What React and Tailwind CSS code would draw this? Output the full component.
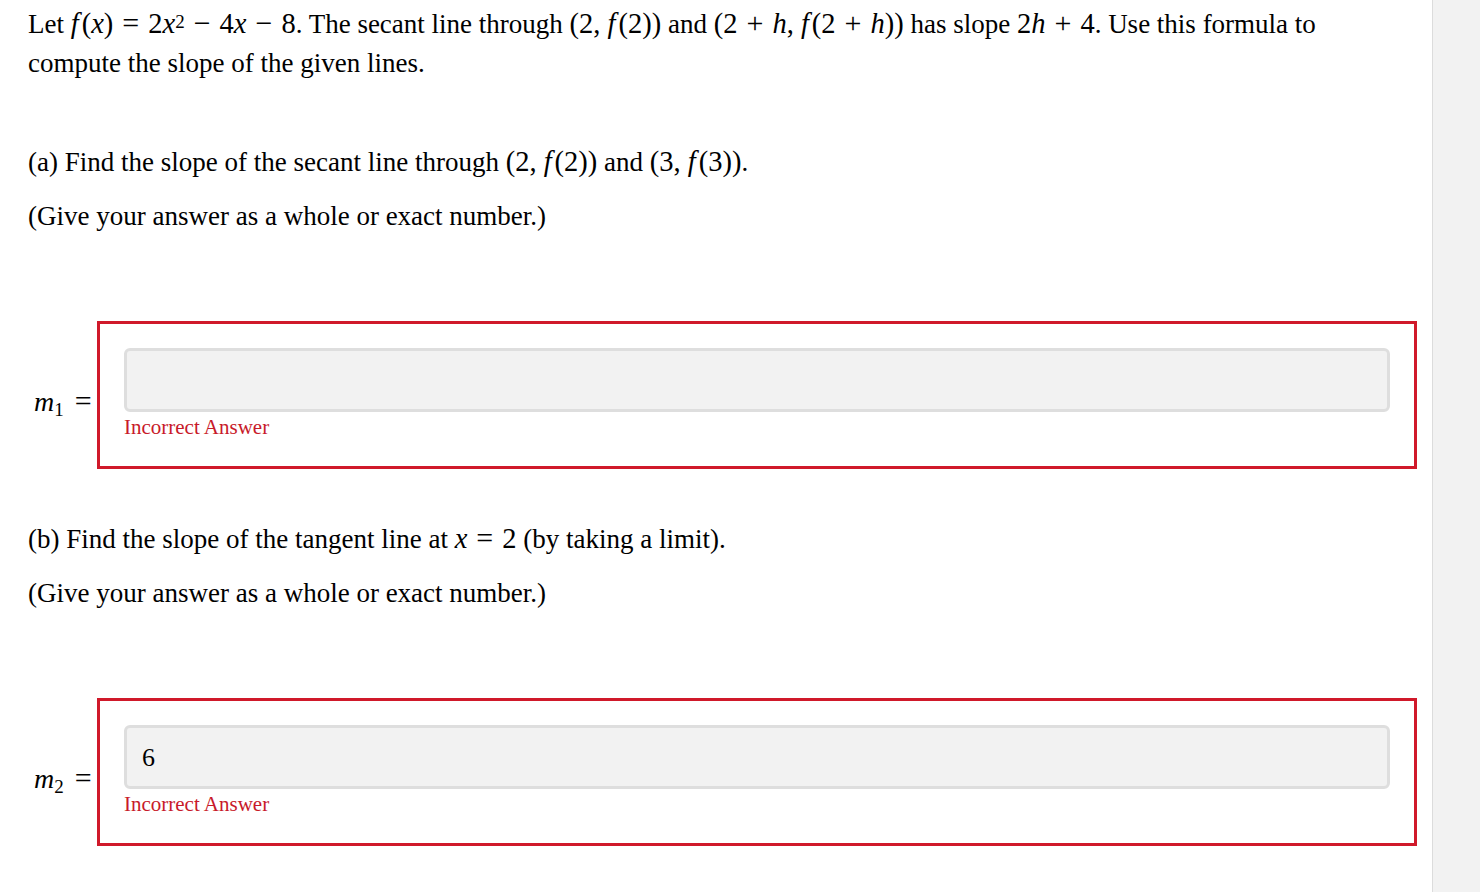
import React from "react";

const I = ({ children, className = "" }) => <span className={`italic ${className}`}>{children}</span>;
const Op = ({ children }) => <span className="mx-[0.3em] text-[30px] leading-none">{children}</span>;
const Rel = ({ children }) => <span className="mx-[0.3em] text-[30px] leading-none">{children}</span>;
const M = ({ children }) => <span className="whitespace-nowrap text-[28.5px] leading-none">{children}</span>;

const AnswerRow = ({ sub, value }) => (
  <div className="flex items-center">
    <div className="flex w-[69px] shrink-0 items-baseline pl-[6px] pt-[14px]">
      <span className="italic text-[28px]">m</span>
      <span className="relative top-[5px] text-[19px]">{sub}</span>
      <span className="ml-[11px] text-[30px]">=</span>
    </div>
    <div className="h-[148px] w-[1320px] border-[3px] border-[#d0192a] px-[24px] pt-[24px]">
      <div className="flex h-[64px] items-center rounded-[6px] border-[3px] border-[#dedede] bg-[#f2f2f2] px-[15px] text-[26px]">
        {value}
      </div>
      <div className="mt-[2px] text-[21px] leading-[26px] text-[#c81a2a]">Incorrect Answer</div>
    </div>
  </div>
);

export default function App() {
  return (
    <div className="flex h-[892px] w-full overflow-hidden bg-white font-['Liberation_Serif','Times_New_Roman',serif] text-black">
      <main className="w-[1432px] shrink-0 pl-[28px] pr-[15px] pt-[5px] text-[27px] leading-[39px]">
        <p className="w-[1330px]">
          Let{" "}
          <M>
            <I className="mr-[3px]">f</I>(<I>x</I>)<Rel>=</Rel>2<I>x</I>
            <sup className="relative -top-[5px] text-[19px] leading-none">2</sup>
            <Op>−</Op>4<I>x</I>
            <Op>−</Op>8
          </M>
          . The secant line through{" "}
          <M>
            (2, <I className="mr-[3px]">f</I>(2))
          </M>{" "}
          and{" "}
          <M>
            (2<Op>+</Op>
            <I>h</I>, <I className="mr-[3px]">f</I>(2<Op>+</Op>
            <I>h</I>))
          </M>{" "}
          has slope{" "}
          <M>
            2<I>h</I>
            <Op>+</Op>4
          </M>
          . Use this formula to compute the slope of the given lines.
        </p>

        <p className="mt-[60px]">
          (a) Find the slope of the secant line through{" "}
          <M>
            (2, <I className="mr-[3px]">f</I>(2))
          </M>{" "}
          and{" "}
          <M>
            (3, <I className="mr-[3px]">f</I>(3))
          </M>
          .
        </p>
        <p className="mt-[15px]">(Give your answer as a whole or exact number.)</p>

        <div className="mt-[85px]">
          <AnswerRow sub="1" value="" />
        </div>

        <p className="mt-[51px]">
          (b) Find the slope of the tangent line at{" "}
          <M>
            <I>x</I>
            <Rel>=</Rel>2
          </M>{" "}
          (by taking a limit).
        </p>
        <p className="mt-[15px]">(Give your answer as a whole or exact number.)</p>

        <div className="mt-[85px]">
          <AnswerRow sub="2" value="6" />
        </div>
      </main>
      <aside className="flex-1 border-l border-[#dcdcdc] bg-[#f2f2f2]" />
    </div>
  );
}
